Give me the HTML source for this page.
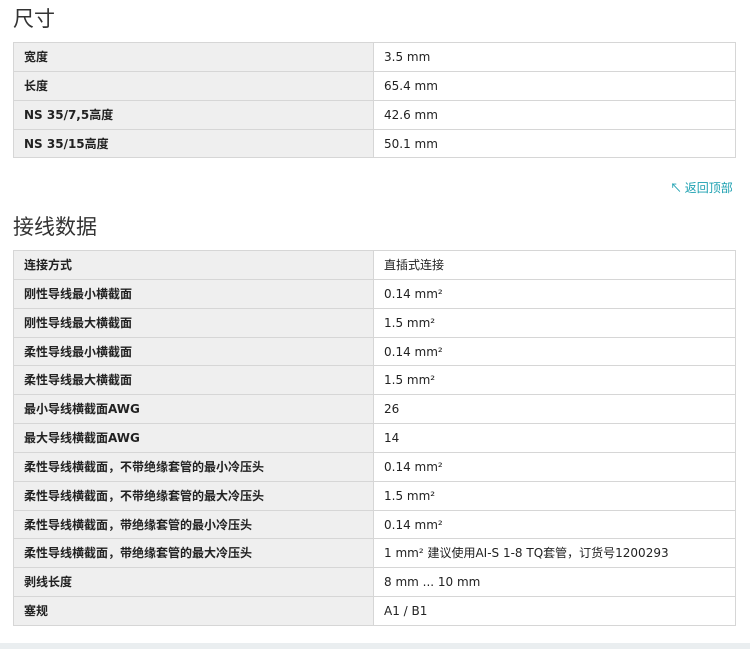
<!DOCTYPE html>
<html><head><meta charset="utf-8"><style>
body{margin:0;background:#fff;width:750px;height:649px;overflow:hidden;font-family:"DejaVu Sans","Liberation Sans","Noto Sans CJK SC",sans-serif;color:#222;position:relative}
h2{position:absolute;left:13px;margin:0;font-weight:normal;font-size:21px;font-family:"Liberation Sans","Noto Sans CJK SC",sans-serif;color:#333}
.t{position:absolute;left:13px;width:723px;border:1px solid #d6d6d6;border-bottom:none;box-sizing:border-box}
.r{display:flex;height:28.85px;border-bottom:1px solid #d6d6d6;box-sizing:border-box;font-size:12px;line-height:29px}
.k{width:360px;background:#efefef;border-right:1px solid #d6d6d6;padding-left:10px;font-weight:bold;box-sizing:border-box}
.v{padding-left:10px;flex:1}
.top{position:absolute;left:670px;top:179px;font-size:12px;color:#1a9fb0;font-family:"Noto Sans CJK SC",sans-serif}
.strip{position:absolute;left:0;top:643px;width:750px;height:6px;background:#eaeef0}
</style></head><body>
<h2 style="top:3px">尺寸</h2>
<div class="t" style="top:42px">
<div class="r"><div class="k">宽度</div><div class="v">3.5 mm</div></div>
<div class="r"><div class="k">长度</div><div class="v">65.4 mm</div></div>
<div class="r"><div class="k">NS 35/7,5高度</div><div class="v">42.6 mm</div></div>
<div class="r"><div class="k">NS 35/15高度</div><div class="v">50.1 mm</div></div>
</div>
<div class="top">↖ 返回顶部</div>
<h2 style="top:211px">接线数据</h2>
<div class="t" style="top:250px">
<div class="r"><div class="k">连接方式</div><div class="v">直插式连接</div></div>
<div class="r"><div class="k">刚性导线最小横截面</div><div class="v">0.14 mm²</div></div>
<div class="r"><div class="k">刚性导线最大横截面</div><div class="v">1.5 mm²</div></div>
<div class="r"><div class="k">柔性导线最小横截面</div><div class="v">0.14 mm²</div></div>
<div class="r"><div class="k">柔性导线最大横截面</div><div class="v">1.5 mm²</div></div>
<div class="r"><div class="k">最小导线横截面AWG</div><div class="v">26</div></div>
<div class="r"><div class="k">最大导线横截面AWG</div><div class="v">14</div></div>
<div class="r"><div class="k">柔性导线横截面，不带绝缘套管的最小冷压头</div><div class="v">0.14 mm²</div></div>
<div class="r"><div class="k">柔性导线横截面，不带绝缘套管的最大冷压头</div><div class="v">1.5 mm²</div></div>
<div class="r"><div class="k">柔性导线横截面，带绝缘套管的最小冷压头</div><div class="v">0.14 mm²</div></div>
<div class="r"><div class="k">柔性导线横截面，带绝缘套管的最大冷压头</div><div class="v">1 mm² 建议使用AI-S 1-8 TQ套管，订货号1200293</div></div>
<div class="r"><div class="k">剥线长度</div><div class="v">8 mm ... 10 mm</div></div>
<div class="r"><div class="k">塞规</div><div class="v">A1 / B1</div></div>
</div>
<div class="strip"></div>
</body></html>
